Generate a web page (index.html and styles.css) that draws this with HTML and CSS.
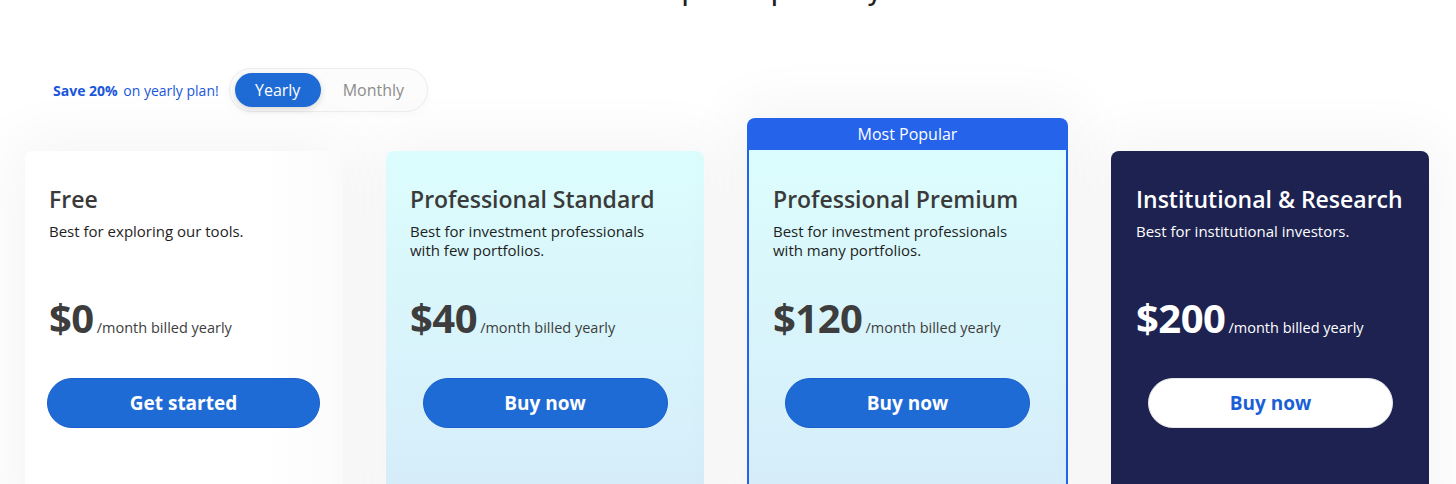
FILE: index.html
```html
<!DOCTYPE html>
<html lang="en">
<head>
    <meta charset="UTF-8">
    <meta name="viewport" content="width=device-width, initial-scale=1.0">
    <title>Pricing</title>
    <link rel="stylesheet" href="styles.css">
</head>
<body>

    <h1 class="page-title">Choose the perfect plan for you</h1>

    <div class="billing-row">
        <p class="save-note"><b>Save 20%</b> on yearly plan!</p>
        <div class="toggle">
            <button class="toggle-btn active">Yearly</button>
            <button class="toggle-btn">Monthly</button>
        </div>
    </div>

    <div class="plans">
        <div class="card card-free">
            <h3 class="plan-name">Free</h3>
            <p class="plan-desc">Best for exploring our tools.</p>
            <div class="price"><span class="amount">$0</span><span class="period">/month billed yearly</span></div>
            <button class="btn btn-blue btn-wide">Get started</button>
        </div>

        <div class="card card-light">
            <h3 class="plan-name">Professional Standard</h3>
            <p class="plan-desc">Best for investment professionals with few portfolios.</p>
            <div class="price"><span class="amount">$40</span><span class="period">/month billed yearly</span></div>
            <button class="btn btn-blue">Buy now</button>
        </div>

        <div class="popular">
            <div class="popular-tag">Most Popular</div>
            <div class="card card-light card-popular">
                <h3 class="plan-name">Professional Premium</h3>
                <p class="plan-desc">Best for investment professionals with many portfolios.</p>
                <div class="price"><span class="amount">$120</span><span class="period">/month billed yearly</span></div>
                <button class="btn btn-blue">Buy now</button>
            </div>
        </div>

        <div class="card card-dark">
            <h3 class="plan-name">Institutional &amp; Research</h3>
            <p class="plan-desc">Best for institutional investors.</p>
            <div class="price"><span class="amount">$200</span><span class="period">/month billed yearly</span></div>
            <button class="btn btn-white">Buy now</button>
        </div>
    </div>

</body>
</html>
```

FILE: styles.css
```css
body {
    margin: 0;
    font-family: "Open Sans", "DejaVu Sans", sans-serif;
    background: #ffffff;
    overflow: hidden;
}
.page-title {
    margin: -21px 0 0 0;
    font-size: 24px;
    line-height: 24px;
    font-weight: 600;
    color: #222;
    text-align: center;
}
.billing-row {
    display: flex;
    align-items: center;
    gap: 10px;
    margin: 65px 0 0 53px;
}
.save-note {
    margin: 0;
    font-size: 14px;
    color: #1a56db;
}
.save-note b {
    font-weight: 700;
    margin-right: 2px;
}
.toggle {
    display: flex;
    align-items: center;
    gap: 4px;
    height: 44px;
    box-sizing: border-box;
    padding: 0 5px;
    border: 1px solid #ececec;
    border-radius: 22px;
    background: #fcfcfc;
    box-shadow: 0 2px 8px rgba(0, 0, 0, 0.03);
}
.toggle-btn {
    font-family: inherit;
    font-size: 16px;
    font-weight: 500;
    color: #8c8c8c;
    background: none;
    border: none;
    height: 34px;
    padding: 0 18px;
    border-radius: 17px;
    cursor: pointer;
}
.toggle-btn.active {
    width: 86px;
    background: #1f6bd6;
    color: #ffffff;
    box-shadow: 0 2px 6px rgba(0, 0, 0, 0.15);
}
.plans {
    display: grid;
    grid-template-columns: 318px 318px 321px 318px;
    column-gap: 43px;
    align-items: end;
    margin: 6px 0 0 25px;
}
.card {
    height: 380px;
    box-sizing: border-box;
    padding: 33px 24px 0 24px;
    border-radius: 8px;
    box-shadow: 0 0 60px 14px rgba(0, 0, 0, 0.045);
}
.card-free {
    background: linear-gradient(90deg, #ffffff 75%, #fbfbfb 100%);
}
.card-light {
    background: linear-gradient(180deg, #dcfdfd 0%, #d5ebf9 100%);
}
.card-dark {
    background: #1d2250;
    color: #ffffff;
    padding-left: 25px;
}
.popular-tag {
    height: 32px;
    line-height: 32px;
    background: #2563eb;
    color: #ffffff;
    font-size: 16px;
    font-weight: 500;
    text-align: center;
    border-radius: 8px 8px 0 0;
}
.card-popular {
    height: 381px;
    border: 2px solid #2563eb;
    border-top: none;
    border-radius: 0 0 8px 8px;
    padding-top: 34px;
}
.popular {
    border-radius: 8px;
    box-shadow: 0 0 60px 14px rgba(0, 0, 0, 0.045);
}
.popular .card {
    box-shadow: none;
}
.plan-name {
    margin: 0;
    font-size: 23px;
    line-height: 30px;
    font-weight: 600;
    color: #3a3a3a;
}
.card-dark .plan-name {
    color: #ffffff;
}
.plan-desc {
    margin: 8px 0 0 0;
    max-width: 250px;
    height: 40px;
    font-size: 15px;
    line-height: 19px;
    color: #1e1e1e;
}
.card-dark .plan-desc {
    color: #ffffff;
}
.price {
    margin-top: 31px;
    display: flex;
    align-items: baseline;
    height: 50px;
    color: #3d3d3d;
}
.card-dark .price {
    color: #ffffff;
}
.amount {
    font-size: 40px;
    line-height: 50px;
    font-weight: 700;
    letter-spacing: -0.5px;
}
.period {
    font-size: 14.5px;
    margin-left: 3px;
}
.btn {
    display: block;
    width: 245px;
    height: 50px;
    margin: 35px auto 0 auto;
    border-radius: 25px;
    font-family: inherit;
    font-size: 19px;
    font-weight: 700;
    cursor: pointer;
}
.btn-wide {
    width: 273px;
    margin-left: -2px;
}
.btn-blue {
    background: #1f6bd6;
    color: #ffffff;
    border: 1px solid #1a5fcc;
}
.btn-white {
    background: #ffffff;
    color: #1a5fd6;
    border: 1px solid #e6e6e6;
}
```
